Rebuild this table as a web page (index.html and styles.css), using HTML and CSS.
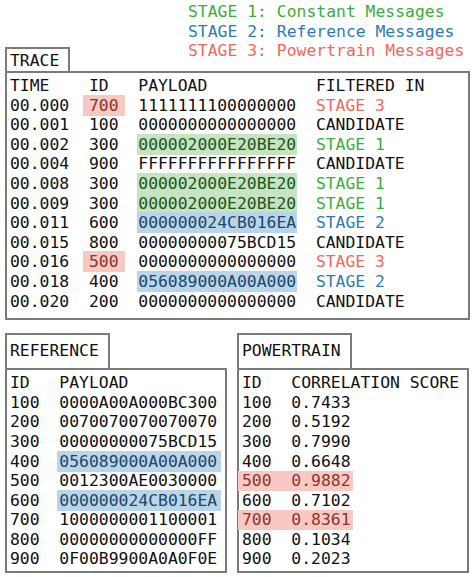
FILE: index.html
```html
<!DOCTYPE html>
<html lang="en">
<head>
  <meta charset="UTF-8">
  <title>CAN filter stages</title>
  <link rel="stylesheet" href="styles.css">
</head>
<body>

  <div class="legend">
    <div class="s1">STAGE 1: Constant Messages</div>
    <div class="s2">STAGE 2: Reference Messages</div>
    <div class="s3">STAGE 3: Powertrain Messages</div>
  </div>

  <!-- Trace -->
  <div class="panel trace">
    <div class="tab">TRACE</div>
    <div class="box">
      <div class="row"><span>TIME</span><span>ID</span><span>PAYLOAD</span><span>FILTERED IN</span></div>
      <div class="row"><span>00.000</span><span><b class="hl-red">700</b></span><span>1111111100000000</span><span class="s3">STAGE 3</span></div>
      <div class="row"><span>00.001</span><span>100</span><span>0000000000000000</span><span>CANDIDATE</span></div>
      <div class="row"><span>00.002</span><span>300</span><span><b class="hl-green">000002000E20BE20</b></span><span class="s1">STAGE 1</span></div>
      <div class="row"><span>00.004</span><span>900</span><span>FFFFFFFFFFFFFFFF</span><span>CANDIDATE</span></div>
      <div class="row"><span>00.008</span><span>300</span><span><b class="hl-green">000002000E20BE20</b></span><span class="s1">STAGE 1</span></div>
      <div class="row"><span>00.009</span><span>300</span><span><b class="hl-green">000002000E20BE20</b></span><span class="s1">STAGE 1</span></div>
      <div class="row"><span>00.011</span><span>600</span><span><b class="hl-blue">000000024CB016EA</b></span><span class="s2">STAGE 2</span></div>
      <div class="row"><span>00.015</span><span>800</span><span>00000000075BCD15</span><span>CANDIDATE</span></div>
      <div class="row"><span>00.016</span><span><b class="hl-red">500</b></span><span>0000000000000000</span><span class="s3">STAGE 3</span></div>
      <div class="row"><span>00.018</span><span>400</span><span><b class="hl-blue">056089000A00A000</b></span><span class="s2">STAGE 2</span></div>
      <div class="row"><span>00.020</span><span>200</span><span>0000000000000000</span><span>CANDIDATE</span></div>
    </div>
  </div>

  <div class="bottom">
    <!-- Reference -->
    <div class="panel">
      <div class="tab tall">REFERENCE</div>
      <div class="box">
        <div class="pair"><span>ID</span><span>PAYLOAD</span></div>
        <div class="pair"><span>100</span><span>0000A00A000BC300</span></div>
        <div class="pair"><span>200</span><span>0070070070070070</span></div>
        <div class="pair"><span>300</span><span>00000000075BCD15</span></div>
        <div class="pair"><span>400</span><span><b class="hl-blue wide">056089000A00A000</b></span></div>
        <div class="pair"><span>500</span><span>0012300AE0030000</span></div>
        <div class="pair"><span>600</span><span><b class="hl-blue wide">000000024CB016EA</b></span></div>
        <div class="pair"><span>700</span><span>1000000001100001</span></div>
        <div class="pair"><span>800</span><span>00000000000000FF</span></div>
        <div class="pair"><span>900</span><span>0F00B9900A0A0F0E</span></div>
      </div>
    </div>

    <!-- Powertrain -->
    <div class="panel">
      <div class="tab tall">POWERTRAIN</div>
      <div class="box">
        <div class="pair"><span>ID</span><span>CORRELATION SCORE</span></div>
        <div class="pair"><span>100</span><span>0.7433</span></div>
        <div class="pair"><span>200</span><span>0.5192</span></div>
        <div class="pair"><span>300</span><span>0.7990</span></div>
        <div class="pair"><span>400</span><span>0.6648</span></div>
        <div class="pair hot"><span>500</span><span>0.9882</span></div>
        <div class="pair"><span>600</span><span>0.7102</span></div>
        <div class="pair hot"><span>700</span><span>0.8361</span></div>
        <div class="pair"><span>800</span><span>0.1034</span></div>
        <div class="pair"><span>900</span><span>0.2023</span></div>
      </div>
    </div>
  </div>

</body>
</html>
```

FILE: styles.css
```css
* {
  margin: 0;
  padding: 0;
  box-sizing: border-box;
}

body {
  background: #fff;
  color: #111;
  font-family: 'DejaVu Sans Mono', 'Liberation Mono', monospace;
  font-size: 16.4px;
  line-height: 19.6px;
  padding: 2px 4px 0 5px;
}

b {
  font-weight: normal;
}

/* stage colours */
.s1 { color: #3aae3a; }
.s2 { color: #2b7bb9; }
.s3 { color: #f1675b; }

.legend {
  padding-left: 183px;
  height: 45px;
}

.tab {
  display: inline-block;
  border: 2px solid #7a7a7a;
  border-bottom: none;
  padding: 2px 9px 0 3px;
  height: 24px;
}

.tab.tall {
  height: 35px;
  padding-top: 6px;
}

.box {
  border: 2px solid #7a7a7a;
  padding: 3px 3px 7px;
}

.row {
  display: grid;
  grid-template-columns: 8ch 5ch 18ch auto;
}

.bottom {
  display: grid;
  grid-template-columns: 222px 232px;
  gap: 10px;
  margin-top: 13px;
}

.bottom .box {
  padding-bottom: 2px;
}

.pair {
  display: grid;
  grid-template-columns: 5ch auto;
  width: max-content;
}

/* highlights */
.hl-red, .hl-green, .hl-blue {
  padding: 1px 1px;
  margin: 0 -1px;
}

.hl-red {
  background: #f8c8c3;
  color: #8a3630;
  padding: 1px 6px;
  margin: 0 -6px;
}

.hl-green {
  background: #c6e4c1;
  color: #1d551d;
}

.hl-blue {
  background: #bad5ea;
  color: #1c4768;
}

.hl-blue.wide {
  padding: 1px 4px 1px 2px;
  margin: 0 -4px 0 -2px;
}

.pair.hot {
  background: #f8c8c3;
  color: #8a3630;
  padding: 0 2px 0 4px;
  margin-left: -4px;
}
```
